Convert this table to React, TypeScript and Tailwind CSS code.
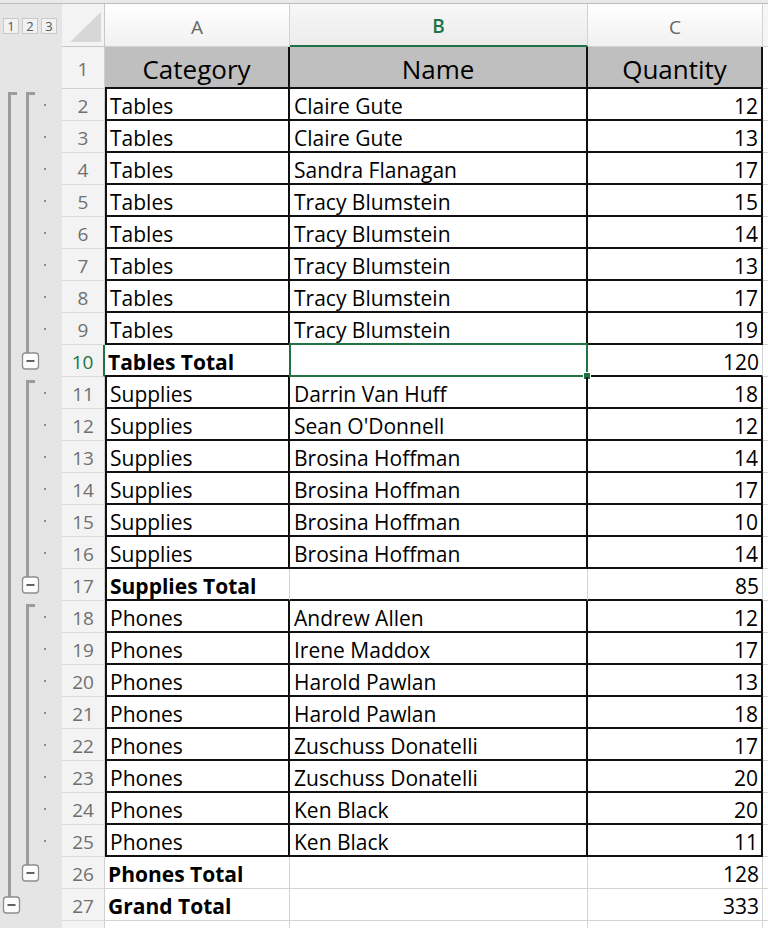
import React from "react";

type Row = {
  n: number;
  cat: string;
  name: string;
  qty: number;
  kind: "item" | "total";
};

const rows: Row[] = [
  { n: 2, cat: "Tables", name: "Claire Gute", qty: 12, kind: "item" },
  { n: 3, cat: "Tables", name: "Claire Gute", qty: 13, kind: "item" },
  { n: 4, cat: "Tables", name: "Sandra Flanagan", qty: 17, kind: "item" },
  { n: 5, cat: "Tables", name: "Tracy Blumstein", qty: 15, kind: "item" },
  { n: 6, cat: "Tables", name: "Tracy Blumstein", qty: 14, kind: "item" },
  { n: 7, cat: "Tables", name: "Tracy Blumstein", qty: 13, kind: "item" },
  { n: 8, cat: "Tables", name: "Tracy Blumstein", qty: 17, kind: "item" },
  { n: 9, cat: "Tables", name: "Tracy Blumstein", qty: 19, kind: "item" },
  { n: 10, cat: "Tables Total", name: "", qty: 120, kind: "total" },
  { n: 11, cat: "Supplies", name: "Darrin Van Huff", qty: 18, kind: "item" },
  { n: 12, cat: "Supplies", name: "Sean O'Donnell", qty: 12, kind: "item" },
  { n: 13, cat: "Supplies", name: "Brosina Hoffman", qty: 14, kind: "item" },
  { n: 14, cat: "Supplies", name: "Brosina Hoffman", qty: 17, kind: "item" },
  { n: 15, cat: "Supplies", name: "Brosina Hoffman", qty: 10, kind: "item" },
  { n: 16, cat: "Supplies", name: "Brosina Hoffman", qty: 14, kind: "item" },
  { n: 17, cat: "Supplies Total", name: "", qty: 85, kind: "total" },
  { n: 18, cat: "Phones", name: "Andrew Allen", qty: 12, kind: "item" },
  { n: 19, cat: "Phones", name: "Irene Maddox", qty: 17, kind: "item" },
  { n: 20, cat: "Phones", name: "Harold Pawlan", qty: 13, kind: "item" },
  { n: 21, cat: "Phones", name: "Harold Pawlan", qty: 18, kind: "item" },
  { n: 22, cat: "Phones", name: "Zuschuss Donatelli", qty: 17, kind: "item" },
  { n: 23, cat: "Phones", name: "Zuschuss Donatelli", qty: 20, kind: "item" },
  { n: 24, cat: "Phones", name: "Ken Black", qty: 20, kind: "item" },
  { n: 25, cat: "Phones", name: "Ken Black", qty: 11, kind: "item" },
  { n: 26, cat: "Phones Total", name: "", qty: 128, kind: "total" },
  { n: 27, cat: "Grand Total", name: "", qty: 333, kind: "total" },
];

// subtotal rows sit right above a bordered block, so their bottom edge is black
const blackBottom = new Set([10, 17]);

const font = "font-['Open_Sans','Liberation_Sans',sans-serif]";

const rowCenter = (n: number) => (n - 2) * 32 + 16;

const MinusBox = ({ x, cy }: { x: number; cy: number }) => (
  <g>
    <rect x={x} y={cy - 8} width={16} height={16} rx={3} fill="#fdfdfd" stroke="#8d8d8d" strokeWidth={1.3} />
    <line x1={x + 4} x2={x + 12} y1={cy} y2={cy} stroke="#3a3a3a" strokeWidth={1.6} />
  </g>
);

const OutlineBars = () => {
  const groups = [
    { from: 2, to: 9, total: 10 },
    { from: 11, to: 16, total: 17 },
    { from: 18, to: 25, total: 26 },
  ];
  return (
    <svg width={62} height={839} className="block">
      <path d={`M17 4.5 H9.5 V${rowCenter(27) - 8}`} fill="none" stroke="#9c9c9c" strokeWidth={3} />
      {groups.map((g) => {
        const top = (g.from - 2) * 32 + 4.5;
        const dots = [];
        for (let r = g.from; r <= g.to; r++) {
          dots.push(<rect key={r} x={44} y={rowCenter(r) - 1} width={2} height={2} fill="#8a8a8a" />);
        }
        return (
          <g key={g.total}>
            <path d={`M35 ${top} H27.5 V${rowCenter(g.total) - 8}`} fill="none" stroke="#9c9c9c" strokeWidth={3} />
            {dots}
            <MinusBox x={22.5} cy={rowCenter(g.total)} />
          </g>
        );
      })}
      <MinusBox x={3.5} cy={rowCenter(27)} />
    </svg>
  );
};

const LevelButtons = () => (
  <div className="flex gap-[3px] pl-[3px] pt-[14px]">
    {["1", "2", "3"].map((l) => (
      <div
        key={l}
        className="flex h-[16px] w-[16px] items-center justify-center border border-[#c9c9c9] bg-[#f2f2f2] text-[13px] leading-none text-[#555]"
      >
        {l}
      </div>
    ))}
  </div>
);

const DataRow = ({ row }: { row: Row }) => {
  const item = row.kind === "item";
  const selected = row.n === 10;
  const bottom = item || blackBottom.has(row.n) ? "border-b-2 border-b-[#111]" : "border-b border-b-[#d4d4d4]";
  const right = item ? "border-r-2 border-r-[#111]" : "border-r border-r-[#d4d4d4]";
  return (
    <div className="flex h-[32px] leading-none">
      <div
        className={`flex w-[43px] items-center justify-center border-b border-b-[#dadada] bg-[#f3f3f3] pt-[4px] text-[19px] ${
          selected ? "border-r-2 border-r-[#217346] text-[#217346]" : "border-r border-r-[#d0d0d0] text-[#707070]"
        }`}
      >
        {row.n}
      </div>
      <div
        className={`flex w-[185px] items-center pl-[3px] pt-[4px] text-[21px] text-black ${bottom} ${right} ${
          item || row.n === 17 ? "border-l-2 border-l-[#111]" : ""
        } ${item ? "" : "font-bold"}`}
      >
        {row.cat}
      </div>
      <div className={`relative flex w-[298px] items-center pl-[4px] pt-[4px] text-[21px] text-black ${bottom} ${right}`}>
        {row.name}
        {selected && (
          <div className="pointer-events-none absolute -left-[1px] -top-[2px] h-[34px] w-[299px] border-2 border-[#217346]">
            <div className="absolute -bottom-[5px] -right-[5px] h-[8px] w-[8px] border border-white bg-[#217346]" />
          </div>
        )}
      </div>
      <div className={`flex w-[175px] items-center justify-end pr-[3px] pt-[4px] text-[21px] text-black ${bottom} ${right}`}>
        {row.qty}
      </div>
      <div className="flex-1 border-b border-b-[#d4d4d4] bg-white" />
    </div>
  );
};

export default function App() {
  return (
    <div className={`h-[928px] w-[768px] overflow-hidden bg-white ${font}`}>
      <div className="h-[4px] border-b border-b-[#bdbdbd] bg-[#e9e9e9]" />
      <div className="flex">
        {/* outline gutter */}
        <div className="flex w-[62px] flex-col bg-[#e5e5e5]">
          <div className="h-[85px]">
            <LevelButtons />
          </div>
          <OutlineBars />
        </div>

        <div className="flex flex-1 flex-col">
          {/* column headers */}
          <div className="flex h-[43px] text-[19px] leading-none text-[#666]">
            <div className="w-[43px] border-b border-r border-[#c8c8c8] bg-[#f3f3f3]">
              <svg width={42} height={42} className="block">
                <polygon points="8,38 39,38 39,8" fill="#d7d7d7" />
              </svg>
            </div>
            <div className="flex w-[185px] items-center justify-center border-b border-r border-[#d2d2d2] bg-gradient-to-b from-[#ffffff] to-[#f1f1f1] pt-[4px]">
              A
            </div>
            <div className="flex w-[298px] items-center justify-center border-b-2 border-r border-b-[#217346] border-r-[#d2d2d2] bg-gradient-to-b from-[#f7f7f7] to-[#ececec] pt-[4px] font-semibold text-[#217346]">
              B
            </div>
            <div className="flex w-[175px] items-center justify-center border-b border-r border-[#d2d2d2] bg-gradient-to-b from-[#ffffff] to-[#f1f1f1] pt-[4px]">
              C
            </div>
            <div className="flex-1 border-b border-[#d2d2d2] bg-[#f6f6f6]" />
          </div>

          {/* title row */}
          <div className="flex h-[42px] leading-none">
            <div className="flex w-[43px] items-center justify-center border-b border-r border-[#d0d0d0] bg-[#f3f3f3] pt-[3px] text-[19px] text-[#707070]">
              1
            </div>
            <div className="flex w-[185px] items-center justify-center border-b-2 border-r-2 border-[#111] bg-[#bfbfbf] pt-[3px] text-[26px] text-black">
              Category
            </div>
            <div className="flex w-[298px] items-center justify-center border-b-2 border-r-2 border-[#111] bg-[#bfbfbf] pt-[3px] text-[26px] text-black">
              Name
            </div>
            <div className="flex w-[175px] items-center justify-center border-b-2 border-r-2 border-[#111] bg-[#bfbfbf] pt-[3px] text-[26px] text-black">
              Quantity
            </div>
            <div className="flex-1 border-b border-[#d4d4d4] bg-white" />
          </div>

          {rows.map((r) => (
            <DataRow key={r.n} row={r} />
          ))}

          <div className="flex h-[10px]">
            <div className="w-[43px] border-r border-[#d0d0d0] bg-[#f3f3f3]" />
            <div className="w-[185px] border-r border-[#d4d4d4]" />
            <div className="w-[298px] border-r border-[#d4d4d4]" />
            <div className="w-[175px] border-r border-[#d4d4d4]" />
          </div>
        </div>
      </div>
    </div>
  );
}
